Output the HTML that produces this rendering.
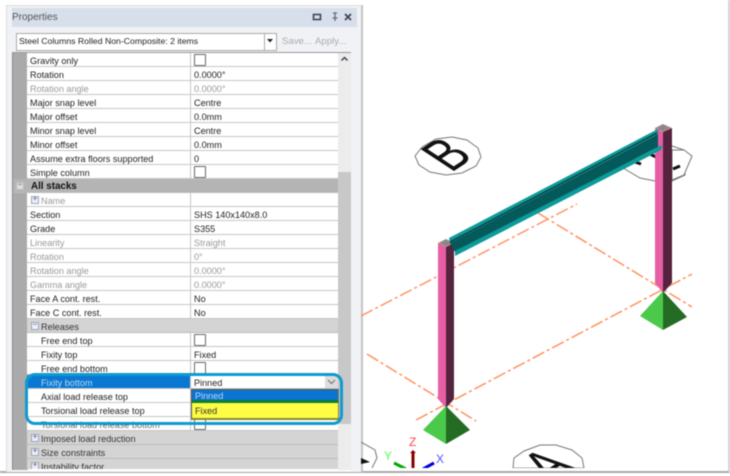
<!DOCTYPE html>
<html><head><meta charset="utf-8"><style>
html,body{margin:0;padding:0;background:#fff}
#w{position:relative;width:730px;height:476px;overflow:hidden;background:#fff;filter:blur(.5px);font-family:"Liberation Sans",sans-serif;font-size:9.1px;color:#222}
#w div,#w span{position:absolute;white-space:nowrap}
.r{left:27px;width:311px;height:13px;border-bottom:1px solid #c6c6c6;background:#fff}
.r .n{left:3px;top:2px;line-height:12px}
.r .v{left:167px;top:2px;line-height:12px}
.r.i .n{left:14px}
.r:after{content:"";position:absolute;left:163px;top:0;width:1px;height:14px;background:#c6c6c6}
.g .n,.g .v{color:#999}
.h{background:#d4d4d4;border-bottom:1px solid #bbb}
.h:after{display:none}
.h .n{left:14px;font-size:9.1px;color:#333}
.c{left:167px;top:1px;width:10px;height:10px;border:1px solid #666;background:#fff;border-radius:1px}
.p{left:4px;top:3px;width:6px;height:6px;border:1px solid #9aa;background:#eef;font:8px/6px "Liberation Mono",monospace;text-align:center;color:#558}
</style></head><body><div id="w">
<!-- page frame -->
<div style="left:0;top:0;width:728px;height:471px;background:#fff;border-bottom:2px solid #aaa;border-right:2px solid #d4d4d4"></div>
<div style="left:6px;top:5px;width:354px;height:466px;background:#f0f2f5;border-right:2px solid #c4c4c4;border-left:1px solid #ddd;border-top:1px solid #ddd"></div>
<div style="left:12px;top:8px;width:345px;height:19px;background:#d6dfea"></div>
<div style="left:12px;top:11px;line-height:13px;font-size:10px;color:#555">Properties</div>
<svg style="position:absolute;left:310px;top:10px" width="46" height="14"><rect x="3.5" y="4.5" width="7" height="5" fill="none" stroke="#445" stroke-width="1.6"/><path d="M23 3h4M25 3v5M22.5 8h5M25 8v3" stroke="#667" stroke-width="1.2" fill="none"/><path d="M35 4l6 6M41 4l-6 6" stroke="#445" stroke-width="1.8"/></svg>
<!-- combo -->
<div style="left:16px;top:33px;width:259px;height:16px;background:#fff;border:1px solid #aaa"></div>
<div style="left:19px;top:35px;line-height:13px;font-size:8.7px;color:#222">Steel Columns Rolled Non-Composite: 2 items</div>
<div style="left:264px;top:33px;width:1px;height:17px;background:#aaa"></div>
<svg style="position:absolute;left:266px;top:38px" width="8" height="6"><path d="M1 1h6l-3 3.500z" fill="#222"/></svg>
<div style="left:282px;top:35px;line-height:13px;font-size:9.6px;color:#aaa">Save...</div>
<div style="left:315px;top:35px;line-height:13px;font-size:9.6px;color:#aaa">Apply...</div>
<!-- grid -->
<div style="left:12px;top:52px;width:339px;height:418px;background:#fff;border-top:1px solid #999"></div>
<div style="left:12px;top:53px;width:15px;height:417px;background:#aaa;border-left:1px solid #888"></div>
<div class="r" style="top:53px"><span class="n">Gravity only</span><span class="c"></span></div>
<div class="r" style="top:67px"><span class="n">Rotation</span><span class="v">0.0000°</span></div>
<div class="r g" style="top:81px"><span class="n">Rotation angle</span><span class="v">0.0000°</span></div>
<div class="r" style="top:95px"><span class="n">Major snap level</span><span class="v">Centre</span></div>
<div class="r" style="top:109px"><span class="n">Major offset</span><span class="v">0.0mm</span></div>
<div class="r" style="top:123px"><span class="n">Minor snap level</span><span class="v">Centre</span></div>
<div class="r" style="top:137px"><span class="n">Minor offset</span><span class="v">0.0mm</span></div>
<div class="r" style="top:151px"><span class="n">Assume extra floors supported</span><span class="v">0</span></div>
<div class="r" style="top:165px"><span class="n">Simple column</span><span class="c"></span></div>
<div class="r h" style="top:179px;background:#b4b4b4;left:13px;width:325px"><span class="n" style="left:18px;font-size:9.8px;font-weight:bold;color:#111">All stacks</span><span class="p" style="left:3px;background:#ddd;border-color:#bbb">−</span></div>
<div class="r g" style="top:193px"><span class="p">+</span><span class="n" style="left:14px">Name</span></div>
<div class="r" style="top:207px"><span class="n">Section</span><span class="v">SHS 140x140x8.0</span></div>
<div class="r" style="top:221px"><span class="n">Grade</span><span class="v">S355</span></div>
<div class="r g" style="top:235px"><span class="n">Linearity</span><span class="v">Straight</span></div>
<div class="r g" style="top:249px"><span class="n">Rotation</span><span class="v">0°</span></div>
<div class="r g" style="top:263px"><span class="n">Rotation angle</span><span class="v">0.0000°</span></div>
<div class="r g" style="top:277px"><span class="n">Gamma angle</span><span class="v">0.0000°</span></div>
<div class="r" style="top:291px"><span class="n">Face A cont. rest.</span><span class="v">No</span></div>
<div class="r" style="top:305px"><span class="n">Face C cont. rest.</span><span class="v">No</span></div>
<div class="r h" style="top:319px"><span class="p">−</span><span class="n">Releases</span></div>
<div class="r i" style="top:333px"><span class="n">Free end top</span><span class="c"></span></div>
<div class="r i" style="top:347px"><span class="n">Fixity top</span><span class="v">Fixed</span></div>
<div class="r i" style="top:361px"><span class="n">Free end bottom</span><span class="c"></span></div>
<div class="r i" style="top:375px"><span class="n" style="z-index:2;color:#bcd8f2">Fixity bottom</span><span style="left:0;top:0;width:163px;height:13px;background:#0a78d2"></span><span class="v" style="color:#222">Pinned</span></div>
<div class="r i" style="top:389px"><span class="n">Axial load release top</span></div>
<div class="r i" style="top:403px"><span class="n">Torsional load release top</span></div>
<div class="r i g" style="top:417px"><span class="n" style="color:#666">Torsional load release bottom</span><span class="c"></span></div>
<div class="r h" style="top:431px"><span class="p">+</span><span class="n">Imposed load reduction</span></div>
<div class="r h" style="top:445px"><span class="p">+</span><span class="n">Size constraints</span></div>
<div class="r h" style="top:459px;height:10px;overflow:hidden;border-bottom:0"><span class="p">+</span><span class="n">Instability factor</span></div>
<!-- scrollbar -->
<div style="left:338px;top:53px;width:13px;height:417px;background:#ececec"></div>
<div style="left:338px;top:172px;width:13px;height:252px;background:#c8c8c8"></div>
<svg style="position:absolute;left:340px;top:55px" width="9" height="8"><path d="M1.500 5.500l3-3 3 3" fill="none" stroke="#444" stroke-width="1.500"/></svg>
<!-- dropdown button -->
<div style="left:325px;top:375px;width:13px;height:13px;background:#dcdcdc"></div>
<svg style="position:absolute;left:326px;top:378px" width="11" height="8"><path d="M2 2l3.500 3.500L9 2" fill="none" stroke="#777" stroke-width="1.200"/></svg>
<!-- list -->
<div style="left:191px;top:389px;width:146px;height:28px;background:#fdfd45;border:1px solid #555;border-right-color:#775;border-bottom:2px solid #8a8a30"></div>
<div style="left:192px;top:390px;width:146px;height:11px;background:#0a74d0"></div>
<div style="left:192px;top:400px;width:146px;height:3px;background:#0b7c35"></div>
<div style="left:195px;top:390px;line-height:12px;color:#bcd8f2;font-size:9.1px">Pinned</div>
<div style="left:195px;top:405px;line-height:12px;color:#333;font-size:9.1px">Fixed</div>
<!-- callout -->
<div style="left:25px;top:373px;width:312px;height:46px;border:3px solid #0f9ad0;border-radius:10px"></div>
<!-- model -->
<svg style="position:absolute;left:0;top:0" width="730" height="476">
<defs><clipPath id="k"><rect x="361" y="0" width="366" height="468"/></clipPath></defs>
<g clip-path="url(#k)">
<polygon points="415,156 422,147 436,139 452,137 467,140 478,148 481,157 476,166 462,173 446,175 430,172 419,165" fill="#fff" stroke="#777"/>
<text transform="matrix(1.64 -1.09 2.2 1.45 451 173)" font-family="Liberation Sans" font-size="22" fill="#111">B</text>
<polygon points="623,168 640,178 655,181 672,181 685,175 684,150 672,146 650,145 630,152" fill="#fff" stroke="#777"/>
<polygon points="672,150 684,150 692,156 684,175 672,180" fill="#fff" stroke="#777"/>
<path d="M635 162l6 2M650 154l6 3M673 169l7-3" stroke="#111" stroke-width="3"/>
<path d="M361 442l14 8 2 8-5 10" fill="none" stroke="#777"/>
<path d="M361 458l9 4-9 2z" fill="#111"/>
<polygon points="513,468 514,458 524,451 540,445 556,445 572,450 582,458 584,468" fill="#fff" stroke="#777"/>
<text transform="matrix(1.64 -1.09 2.2 1.45 551.700 484)" font-family="Liberation Sans" font-size="22" fill="#111">A</text>
<g stroke="#ff9160" stroke-width="1.500" fill="none" stroke-dasharray="13 3 3 3">
<path d="M361 316L577 204"/><path d="M538 213L692 307"/><path d="M416 420L692 274"/><path d="M367 354L476 421"/>
</g>
<!-- columns -->
<polygon points="438,243 446,247 446,408 438,399" fill="#e65fa5"/>
<polygon points="446,247 454,243 454,399 446,408" fill="#56233f"/>
<polygon points="438,243 446,239 454,243 446,247" fill="#a88"/>
<polygon points="441,243 446,240 451,243 446,246" fill="#888"/>
<polygon points="655,128 663,132 663,293 655,283" fill="#e65fa5"/>
<polygon points="663,132 672,128 672,283 663,293" fill="#56233f"/>
<polygon points="655,128 663,124 672,128 663,132" fill="#a88"/>
<polygon points="658,128 663,125 668,128 663,131" fill="#888"/>
<!-- beam -->
<polygon points="449,238 658,129 658,134 450,243" fill="#0c9a9a"/>
<polygon points="450,243 658,134 658,147 455,252" fill="#045a5a"/>
<polygon points="455,251 662,145 661,150 455,256" fill="#0c9a9a"/>
<path d="M450 242L657 133" stroke="#0a2a2a" stroke-width="1"/>
<!-- pyramids -->
<polygon points="446,406 423,430 446,444" fill="#4bc94b"/>
<polygon points="446,406 470,430 446,444" fill="#246b24"/>
<polygon points="663,291 640,316 663,330" fill="#4bc94b"/>
<polygon points="663,291 687,317 663,330" fill="#246b24"/>
<!-- axes -->
<path d="M413 452v17" stroke="#8b0000" stroke-width="3"/><path d="M410 453l3-3 3 3z" fill="#8b0000"/>
<path d="M394 463l12 6" stroke="#0a0" stroke-width="3"/>
<path d="M434 463l-11 6" stroke="#00d" stroke-width="3"/>
<text x="409" y="446" font-family="Liberation Sans" font-size="12" fill="#f45">Z</text>
<text x="384" y="460" font-family="Liberation Sans" font-size="12" fill="#5f5">Y</text>
<text x="436" y="463" font-family="Liberation Sans" font-size="12" fill="#55f">X</text>
</g>
</svg>
</div></body></html>
